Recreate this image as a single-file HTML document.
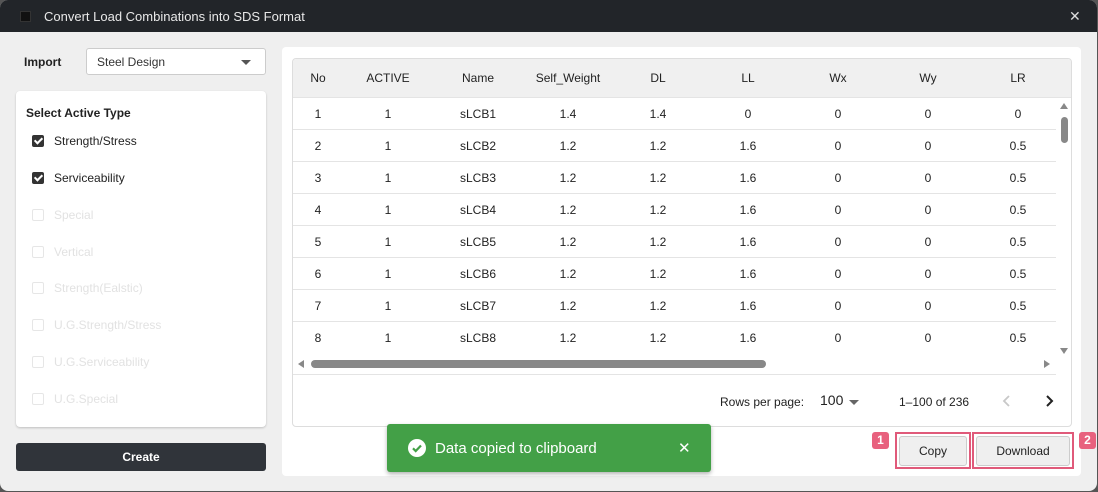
<!DOCTYPE html>
<html><head><meta charset="utf-8"><style>
*{box-sizing:border-box;margin:0;padding:0}
body{width:1098px;height:492px;background:#555;font-family:"Liberation Sans",sans-serif;position:relative;overflow:hidden;color:#222}
.dlg{position:absolute;left:0;top:0;width:1097px;height:491px;background:#efefef;border-radius:8px;overflow:hidden}
.title{position:absolute;left:0;top:0;width:100%;height:32px;background:#222529;color:#e8e8e8;font-size:13px}
.title .ic{position:absolute;left:20px;top:11px;width:11px;height:11px;background:#111;border:1px solid #333}
.title .t{position:absolute;left:44px;top:9px}
.title .x{position:absolute;left:1069px;top:8px;font-size:14px;color:#ddd}
.abs{position:absolute}
.lbl{left:24px;top:55px;font-size:12px;font-weight:bold}
.sel{left:86px;top:48px;width:180px;height:27px;background:#fff;border:1px solid #ccc;border-radius:3px;font-size:12px;padding:6px 0 0 10px;color:#333}
.sel:after{content:"";position:absolute;right:14px;top:11px;border-left:5px solid transparent;border-right:5px solid transparent;border-top:5px solid #555}
.card{left:16px;top:91px;width:250px;height:336px;background:#fff;border-radius:4px;box-shadow:0 1px 2px rgba(0,0,0,.2)}
.card h4{position:absolute;left:10px;top:15px;font-size:12px}
.cb{position:absolute;left:16px;width:12px;height:12px;border-radius:2px}
.cb.on{background:#333}
.cb.on:after{content:"";position:absolute;left:3.5px;top:1px;width:3px;height:6px;border:solid #fff;border-width:0 2px 2px 0;transform:rotate(45deg)}
.cb.off{border:1px solid #e6e6e6}
.cl{position:absolute;left:38px;font-size:12px}
.cl.d{color:#e2e2e2}
.create{left:16px;top:443px;width:250px;height:28px;background:#30343a;border-radius:3px;color:#fff;font-size:12px;font-weight:bold;text-align:center;line-height:28px}
.panel{left:282px;top:47px;width:799px;height:429px;background:#fff;border-radius:4px}
.tbl{left:292px;top:58px;width:780px;height:369px;border:1px solid #ddd;border-radius:4px;overflow:hidden;background:#fff}
.row{position:absolute;left:0;height:32px;width:763px;border-bottom:1px solid #e4e4e4;font-size:12px}
.row span{position:absolute;top:0;line-height:32px;text-align:center;width:90px}
.hd{background:#f0f0f0;height:39px;font-size:12px;width:780px}
.hd span{line-height:39px}
.vs{left:763px;top:39px;width:16px;height:257px}
.hs{left:0;top:296px;width:763px;height:20px;border-bottom:1px solid #e4e4e4}
.foot{font-size:12px}
.btn{height:30px;background:#efefef;border:1px solid #ccc;border-radius:3px;font-size:12px;text-align:center;line-height:28px}
.hl{border:2px solid #e05a7a}
.badge{width:17px;height:17px;background:#e8617e;color:#fff;font-size:12px;font-weight:bold;text-align:center;line-height:17px;border-radius:3px}
.toast{left:387px;top:424px;width:324px;height:48px;background:#43a047;border-radius:3px;color:#fff;font-size:15px;box-shadow:0 2px 4px rgba(0,0,0,.3)}
</style></head><body>
<div class="dlg">
<div class="title"><div class="ic"></div><div class="t">Convert Load Combinations into SDS Format</div><div class="x">✕</div></div>
<div class="abs lbl">Import</div>
<div class="abs sel">Steel Design</div>
<div class="abs card">
<h4>Select Active Type</h4>
<div class="cb on" style="top:44px"></div><div class="cl" style="top:43px">Strength/Stress</div>
<div class="cb on" style="top:81px"></div><div class="cl" style="top:80px">Serviceability</div>
<div class="cb off" style="top:118px"></div><div class="cl d" style="top:117px">Special</div>
<div class="cb off" style="top:155px"></div><div class="cl d" style="top:154px">Vertical</div>
<div class="cb off" style="top:191px"></div><div class="cl d" style="top:190px">Strength(Ealstic)</div>
<div class="cb off" style="top:228px"></div><div class="cl d" style="top:227px">U.G.Strength/Stress</div>
<div class="cb off" style="top:265px"></div><div class="cl d" style="top:264px">U.G.Serviceability</div>
<div class="cb off" style="top:302px"></div><div class="cl d" style="top:301px">U.G.Special</div>
</div>
<div class="abs create">Create</div>
<div class="abs panel"></div>
<div class="abs tbl">
<div class="row hd" style="top:0"><span style="left:0;width:50px">No</span><span style="left:50px">ACTIVE</span><span style="left:140px">Name</span><span style="left:230px">Self_Weight</span><span style="left:320px">DL</span><span style="left:410px">LL</span><span style="left:500px">Wx</span><span style="left:590px">Wy</span><span style="left:680px">LR</span></div>
<div class="row" style="top:39px"><span style="left:0;width:50px">1</span><span style="left:50px">1</span><span style="left:140px">sLCB1</span><span style="left:230px">1.4</span><span style="left:320px">1.4</span><span style="left:410px">0</span><span style="left:500px">0</span><span style="left:590px">0</span><span style="left:680px">0</span></div>
<div class="row" style="top:71px"><span style="left:0;width:50px">2</span><span style="left:50px">1</span><span style="left:140px">sLCB2</span><span style="left:230px">1.2</span><span style="left:320px">1.2</span><span style="left:410px">1.6</span><span style="left:500px">0</span><span style="left:590px">0</span><span style="left:680px">0.5</span></div>
<div class="row" style="top:103px"><span style="left:0;width:50px">3</span><span style="left:50px">1</span><span style="left:140px">sLCB3</span><span style="left:230px">1.2</span><span style="left:320px">1.2</span><span style="left:410px">1.6</span><span style="left:500px">0</span><span style="left:590px">0</span><span style="left:680px">0.5</span></div>
<div class="row" style="top:135px"><span style="left:0;width:50px">4</span><span style="left:50px">1</span><span style="left:140px">sLCB4</span><span style="left:230px">1.2</span><span style="left:320px">1.2</span><span style="left:410px">1.6</span><span style="left:500px">0</span><span style="left:590px">0</span><span style="left:680px">0.5</span></div>
<div class="row" style="top:167px"><span style="left:0;width:50px">5</span><span style="left:50px">1</span><span style="left:140px">sLCB5</span><span style="left:230px">1.2</span><span style="left:320px">1.2</span><span style="left:410px">1.6</span><span style="left:500px">0</span><span style="left:590px">0</span><span style="left:680px">0.5</span></div>
<div class="row" style="top:199px"><span style="left:0;width:50px">6</span><span style="left:50px">1</span><span style="left:140px">sLCB6</span><span style="left:230px">1.2</span><span style="left:320px">1.2</span><span style="left:410px">1.6</span><span style="left:500px">0</span><span style="left:590px">0</span><span style="left:680px">0.5</span></div>
<div class="row" style="top:231px"><span style="left:0;width:50px">7</span><span style="left:50px">1</span><span style="left:140px">sLCB7</span><span style="left:230px">1.2</span><span style="left:320px">1.2</span><span style="left:410px">1.6</span><span style="left:500px">0</span><span style="left:590px">0</span><span style="left:680px">0.5</span></div>
<div class="row" style="top:263px;border:0;height:33px"><span style="left:0;width:50px">8</span><span style="left:50px">1</span><span style="left:140px">sLCB8</span><span style="left:230px">1.2</span><span style="left:320px">1.2</span><span style="left:410px">1.6</span><span style="left:500px">0</span><span style="left:590px">0</span><span style="left:680px">0.5</span></div>
<div class="abs vs">
<div class="abs" style="left:4px;top:5px;border-left:4px solid transparent;border-right:4px solid transparent;border-bottom:6px solid #888"></div>
<div class="abs" style="left:5px;top:19px;width:7px;height:26px;background:#888;border-radius:4px"></div>
<div class="abs" style="left:4px;top:250px;border-left:4px solid transparent;border-right:4px solid transparent;border-top:6px solid #888"></div>
</div>
<div class="abs hs">
<div class="abs" style="left:5px;top:5px;border-top:4px solid transparent;border-bottom:4px solid transparent;border-right:6px solid #888"></div>
<div class="abs" style="left:18px;top:5px;width:455px;height:8px;background:#888;border-radius:4px"></div>
<div class="abs" style="left:751px;top:5px;border-top:4px solid transparent;border-bottom:4px solid transparent;border-left:6px solid #888"></div>
</div>
<div class="abs foot" style="left:427px;top:336px">Rows per page:</div>
<div class="abs" style="left:527px;top:333px;font-size:14px">100</div>
<div class="abs" style="left:556px;top:341px;border-left:5px solid transparent;border-right:5px solid transparent;border-top:5px solid #666"></div>
<div class="abs foot" style="left:606px;top:336px">1–100 of 236</div>
<svg class="abs" style="left:708px;top:335px" width="12" height="14" viewBox="0 0 12 14"><path d="M8 2L3 7l5 5" stroke="#c8c8c8" stroke-width="1.8" fill="none"/></svg>
<svg class="abs" style="left:750px;top:335px" width="12" height="14" viewBox="0 0 12 14"><path d="M4 2l5 5-5 5" stroke="#222" stroke-width="2" fill="none"/></svg>
</div>
<div class="abs badge" style="left:872px;top:432px">1</div>
<div class="abs hl" style="left:895px;top:432px;width:76px;height:37px;padding:2px"><div class="btn">Copy</div></div>
<div class="abs hl" style="left:972px;top:432px;width:102px;height:37px;padding:2px"><div class="btn">Download</div></div>
<div class="abs badge" style="left:1079px;top:432px">2</div>
<div class="abs toast">
<svg class="abs" style="left:21px;top:15px" width="18" height="18" viewBox="0 0 18 18"><circle cx="9" cy="9" r="9" fill="#fff"/><path d="M5 9.3l2.7 2.7L13 6.5" stroke="#43a047" stroke-width="2.2" fill="none"/></svg>
<div class="abs" style="left:48px;top:16px">Data copied to clipboard</div>
<div class="abs" style="left:291px;top:15px;font-size:15px">✕</div>
</div>
</div>
</body></html>
